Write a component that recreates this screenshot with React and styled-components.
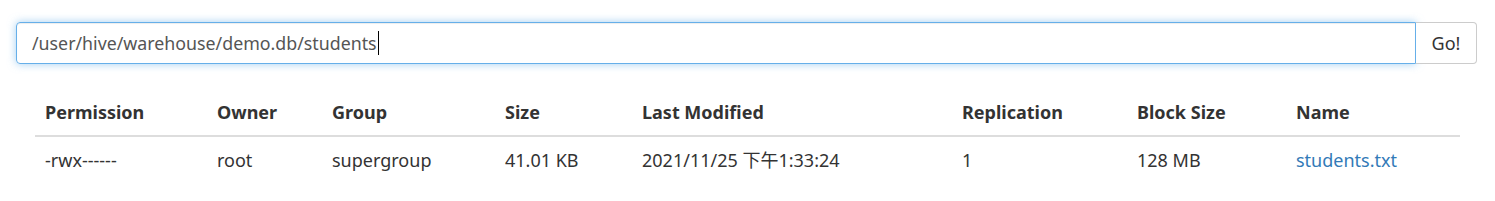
import React from 'react';
import styled, { createGlobalStyle } from 'styled-components';

const GlobalStyle = createGlobalStyle`
  body {
    margin: 0;
    background: #fff;
    font-family: "Noto Sans", "Noto Sans CJK SC", sans-serif;
    color: #333;
  }
`;

const StyledWrapper = styled.div`
  padding: 22px 18px 0 16px;
`;

const StyledInputGroup = styled.div`
  display: flex;
  height: 42px;
`;

const StyledField = styled.div`
  flex: 1;
  display: flex;
  align-items: center;
  padding: 0 15px;
  font-size: 17.8px;
  color: #555;
  border: 1px solid #66afe9;
  border-radius: 4px 0 0 4px;
  box-shadow: inset 0 1px 1px rgba(0, 0, 0, 0.075), 0 0 8px rgba(102, 175, 233, 0.6);
`;

const StyledCaret = styled.span`
  display: inline-block;
  width: 1px;
  height: 24px;
  margin-left: 1px;
  background: #000;
`;

const StyledButton = styled.button`
  width: 61px;
  border: 1px solid #ccc;
  border-left: none;
  border-radius: 0 4px 4px 0;
  background: #fff;
  font-family: inherit;
  font-size: 18px;
  color: #333;
`;

const StyledTable = styled.table`
  margin: 28px 0 0 19px;
  width: 1425px;
  border-collapse: collapse;
  font-size: 18px;
  text-align: left;
`;

const StyledTh = styled.th`
  padding: 8px 10px 10px;
  line-height: 25px;
  font-weight: 700;
  border-bottom: 2px solid #ddd;
`;

const StyledTd = styled.td`
  padding: 11px 10px 12px;
  line-height: 25px;
`;

const StyledLink = styled.a`
  color: #337ab7;
  text-decoration: none;
`;

const columns = [
  { title: 'Permission', width: 172 },
  { title: 'Owner', width: 115 },
  { title: 'Group', width: 173 },
  { title: 'Size', width: 137 },
  { title: 'Last Modified', width: 320 },
  { title: 'Replication', width: 175 },
  { title: 'Block Size', width: 159 },
  { title: 'Name', width: 174 },
];

const row = ['-rwx------', 'root', 'supergroup', '41.01 KB', '2021/11/25 下午1:33:24', '1', '128 MB'];

const App = () => (
  <StyledWrapper>
    <GlobalStyle />
    <StyledInputGroup>
      <StyledField>
        /user/hive/warehouse/demo.db/students
        <StyledCaret />
      </StyledField>
      <StyledButton>Go!</StyledButton>
    </StyledInputGroup>
    <StyledTable>
      <colgroup>
        {columns.map((c) => (
          <col key={c.title} style={{ width: c.width }} />
        ))}
      </colgroup>
      <thead>
        <tr>
          {columns.map((c) => (
            <StyledTh key={c.title}>{c.title}</StyledTh>
          ))}
        </tr>
      </thead>
      <tbody>
        <tr>
          {row.map((v, i) => (
            <StyledTd key={i}>{v}</StyledTd>
          ))}
          <StyledTd>
            <StyledLink href="#">students.txt</StyledLink>
          </StyledTd>
        </tr>
      </tbody>
    </StyledTable>
  </StyledWrapper>
);

export default App;
